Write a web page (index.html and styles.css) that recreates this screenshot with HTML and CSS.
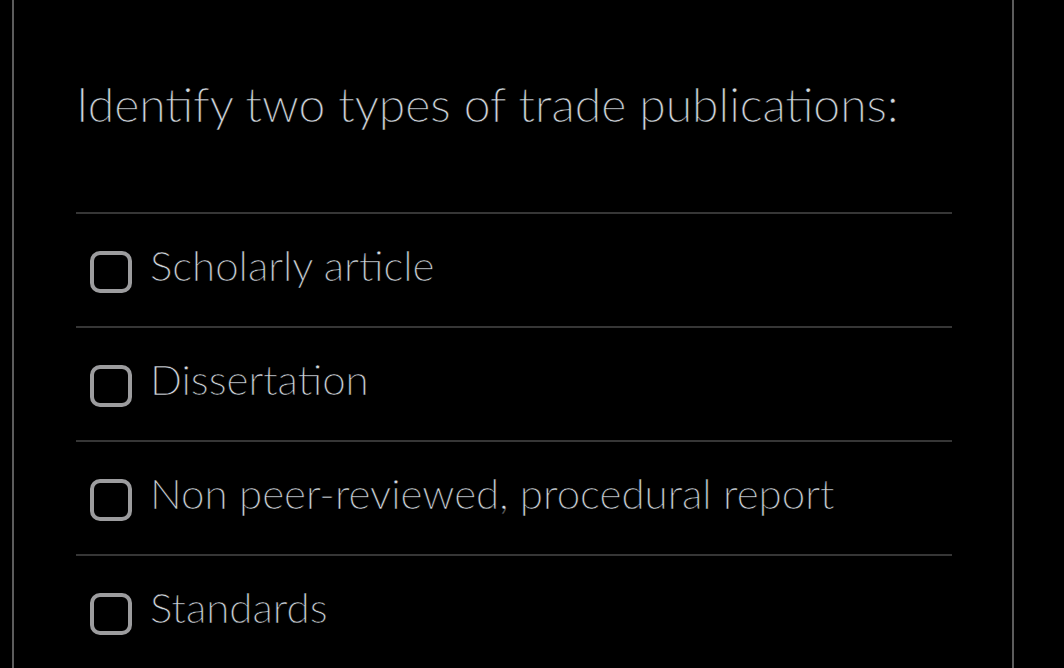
FILE: index.html
```html
<!DOCTYPE html>
<html lang="en">
    <head>
        <meta charset="utf-8">
        <title>Question</title>
        <link rel="stylesheet" href="styles.css">
    </head>
    <body>
        <div class="panel">
            <h1 class="prompt">Identify two types of trade publications:</h1>

            <ul class="answers">
                <li class="answer"><span class="box"></span><span class="label">Scholarly article</span></li>
                <li class="answer"><span class="box"></span><span class="label">Dissertation</span></li>
                <li class="answer"><span class="box"></span><span class="label">Non peer-reviewed, procedural report</span></li>
                <li class="answer"><span class="box"></span><span class="label">Standards</span></li>
            </ul>
        </div>
    </body>
</html>
```

FILE: styles.css
```css
* {
    box-sizing: border-box;
    margin: 0;
    padding: 0;
}

html {
    background: #000;
    color: #d3d9df;
    font-family: "Lato Light", Lato, "Open Sans", sans-serif;
    font-weight: 300;
    -webkit-font-smoothing: antialiased;
    /* only the regular cut is around, so shave the strokes down */
    -webkit-text-stroke: 0.5px #000;
}

body {
    height: 668px;
    overflow: hidden;
}

.panel {
    width: 1002px;
    height: 100%;
    margin-left: 12px;
    padding: 74px 0 0 62px;
    border-left: 2px solid #5c5c5c;
    border-right: 2px solid #5c5c5c;
}

.prompt {
    font-size: 48px;
    font-weight: 300;
    line-height: 60px;
    margin-bottom: 78px;
}

.answers {
    list-style: none;
    width: 876px;
}

.answer {
    display: flex;
    align-items: center;
    gap: 18px;
    height: 114px;
    padding-left: 14px;
    border-top: 2px solid #363636;
    font-size: 42px;
}

.box {
    flex: none;
    width: 42px;
    height: 42px;
    margin-top: 4px;
    border: 4px solid #9c9c9e;
    border-radius: 10px;
}

.label {
    line-height: 1;
    padding-bottom: 10px;
}
```
